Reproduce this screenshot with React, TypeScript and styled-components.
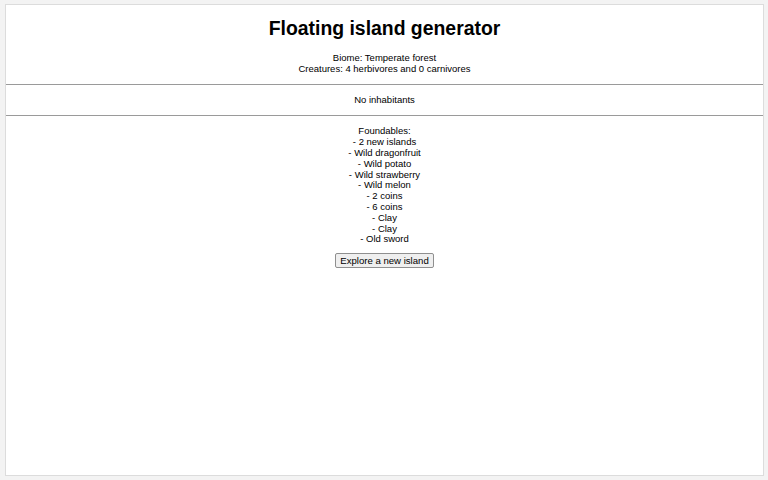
import React from "react";
import styled, { createGlobalStyle } from "styled-components";

const GlobalStyle = createGlobalStyle`
  html, body {
    margin: 0;
    padding: 0;
    background: #f3f3f3;
  }
  body {
    padding: 4px 4px 4px 5px;
    font-family: "Liberation Sans", Arial, sans-serif;
    color: #000;
  }
`;

const Card = styled.div`
  box-sizing: border-box;
  height: calc(100vh - 8px);
  background: #fff;
  border: 1px solid #dcdcdc;
  text-align: center;
`;

const Header = styled.div`
  padding: 12px 0 9px;
`;

const Title = styled.h1`
  margin: 0 0 13px;
  font-size: 19.4px;
  line-height: 23px;
  font-weight: bold;
`;

const Section = styled.div`
  padding: 10px 0 10px;
  font-size: 9.5px;
  line-height: 10.8px;
`;

const Info = styled.div`
  font-size: 9.5px;
  line-height: 10.8px;
`;

const Divider = styled.hr`
  margin: 0;
  border: none;
  border-top: 1px solid #9a9a9a;
`;

const List = styled.div`
  margin-bottom: 8px;
`;

const Button = styled.button`
  font-family: "Liberation Sans", Arial, sans-serif;
  font-size: 9.6px;
  line-height: 11px;
  padding: 1px 4.5px;
  background: #efefef;
  border: 1px solid #8f8f8f;
  border-radius: 2px;
  color: #000;
`;

const foundables = [
  "2 new islands",
  "Wild dragonfruit",
  "Wild potato",
  "Wild strawberry",
  "Wild melon",
  "2 coins",
  "6 coins",
  "Clay",
  "Clay",
  "Old sword",
];

export default function App() {
  return (
    <>
      <GlobalStyle />
      <Card>
        <Header>
          <Title>Floating island generator</Title>
          <Info>Biome: Temperate forest</Info>
          <Info>Creatures: 4 herbivores and 0 carnivores</Info>
        </Header>
        <Divider />
        <Section>No inhabitants</Section>
        <Divider />
        <Section>
          <List>
            <div>Foundables:</div>
            {foundables.map((f, i) => (
              <div key={i}>- {f}</div>
            ))}
          </List>
          <Button>Explore a new island</Button>
        </Section>
      </Card>
    </>
  );
}
